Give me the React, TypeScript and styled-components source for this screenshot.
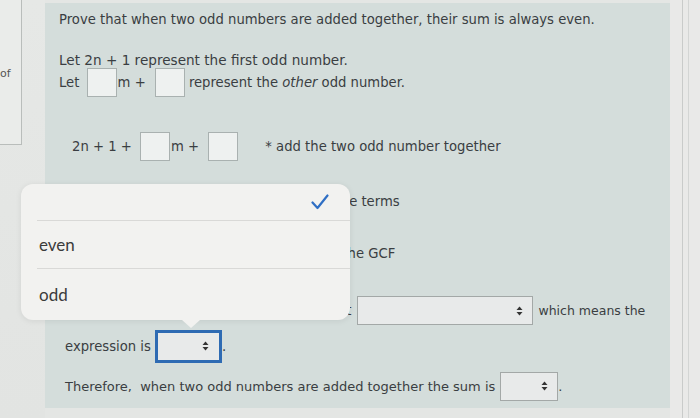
import React from "react";
import styled, { createGlobalStyle } from "styled-components";

const Global = createGlobalStyle`
  html, body { margin: 0; padding: 0; }
  body {
    width: 700px; height: 418px; overflow: hidden;
    background: #e4e6e4;
    font-family: "DejaVu Sans", Verdana, sans-serif;
    color: #3a3e42;
  }
`;

const Page = styled.div`
  position: relative;
  display: flex;
  width: 700px;
  height: 418px;
`;

const Gutter = styled.div`
  width: 45px;
  flex: none;
  background: linear-gradient(180deg, #e6e8e6 0%, #e2e4e2 100%);
`;

const SideBox = styled.div`
  width: 22px;
  height: 145px;
  border-right: 1px solid #b9bdbb;
  border-bottom: 1px solid #b9bdbb;
  background: #eaecea;
  display: flex;
  align-items: center;
  font-size: 11px;
  color: #555;
  box-sizing: border-box;
  & > span { margin-left: 0px; margin-top: 2px; }
`;

const Panel = styled.div`
  flex: none;
  width: 625px;
  margin: 3px 0 10px 0;
  background: #d4dddb;
  padding: 6px 0 0 14px;
  box-sizing: border-box;
  font-size: 13.2px;
`;

const Rail = styled.div`
  flex: 1;
  background: #e9e9e8;
  display: flex;
  & > div:nth-child(1) { width: 12px; border-right: 1px solid #c9cbca; }
  & > div:nth-child(2) { width: 5px; border-right: 1px solid #d3d5d4; }
`;

const Row = styled.div<{ $top: number; $h: number; $indent?: number; $size?: number }>`
  display: flex;
  align-items: center;
  white-space: pre;
  margin-top: ${(p) => p.$top}px;
  height: ${(p) => p.$h}px;
  padding-left: ${(p) => p.$indent ?? 0}px;
  ${(p) => (p.$size ? `font-size: ${p.$size}px;` : "")}
`;

const Box = styled.span<{ $ml?: number; $mr?: number }>`
  display: inline-block;
  width: 28px;
  height: 27px;
  border: 1px solid #a9b1b0;
  background: #eef1f0;
  margin-left: ${(p) => p.$ml ?? 0}px;
  margin-right: ${(p) => p.$mr ?? 0}px;
`;

const Hint = styled.span<{ $ml: number }>`
  margin-left: ${(p) => p.$ml}px;
`;

const Tail = styled.span`
  font-size: 12.5px;
  margin-left: 5px;
`;

const Select = styled.span<{ $w: number; $h: number; $active?: boolean; $ml?: number }>`
  display: inline-flex;
  align-items: center;
  justify-content: flex-end;
  box-sizing: border-box;
  width: ${(p) => p.$w}px;
  height: ${(p) => p.$h}px;
  margin-left: ${(p) => p.$ml ?? 0}px;
  background: #e8eaea;
  border: ${(p) => (p.$active ? "3px solid #2e6bb3" : "1px solid #a3a8a7")};
  padding-right: ${(p) => (p.$active ? 10 : 9)}px;
`;

const Arrows = () => (
  <svg width="7" height="10" viewBox="0 0 7 10">
    <path d="M3.5 0.5 L6.5 4 L0.5 4 Z" fill="#333" />
    <path d="M3.5 9.5 L6.5 6 L0.5 6 Z" fill="#333" />
  </svg>
);

const Popup = styled.div`
  position: absolute;
  left: 21px;
  top: 184px;
  width: 329px;
  height: 136px;
  background: #f2f2f0;
  border-radius: 12px;
  box-shadow: 0 1px 6px rgba(0, 0, 0, 0.08);
  font-family: Lato, "Noto Sans", sans-serif;
  font-size: 17px;
  color: #3b3b3b;
  display: flex;
  flex-direction: column;
  &::after {
    content: "";
    position: absolute;
    left: 161px;
    bottom: -8px;
    border-left: 9px solid transparent;
    border-right: 9px solid transparent;
    border-top: 8px solid #f2f2f0;
  }
`;

const Option = styled.div<{ $h: number; $line?: boolean }>`
  height: ${(p) => p.$h}px;
  margin-left: 16px;
  padding-left: 2px;
  display: flex;
  align-items: center;
  justify-content: ${(p) => (p.$line ? "flex-start" : "flex-end")};
  border-top: ${(p) => (p.$line ? "1px solid #d9d9d7" : "none")};
  box-sizing: border-box;
  padding-right: ${(p) => (p.$line ? 0 : 21)}px;
`;

const Check = () => (
  <svg width="18" height="16" viewBox="0 0 18 16">
    <path d="M1.5 8.5 L6.5 14 L16.5 1.5" fill="none" stroke="#2f6fc4" strokeWidth="2.2" strokeLinecap="round" strokeLinejoin="round" />
  </svg>
);

export default function App() {
  return (
    <>
      <Global />
      <Page>
        <Gutter>
          <SideBox>
            <span>of</span>
          </SideBox>
        </Gutter>
        <Panel>
          <Row $top={0} $h={20}>
            Prove that when two odd numbers are added together, their sum is always even.
          </Row>
          <Row $top={23} $h={16} $size={13.6}>
            Let 2n + 1 represent the first odd number.
          </Row>
          <Row $top={0} $h={29}>
            Let <Box $ml={3} $mr={1} />m + <Box $ml={5} $mr={4} />represent the <i>other</i> odd number.
          </Row>
          <Row $top={35} $h={29} $indent={13}>
            2n + 1 + <Box $ml={4} $mr={1} />m + <Box $ml={5} />
            <Hint $ml={27}>* add the two odd number together</Hint>
          </Row>
          <Row $top={30} $h={20} $indent={204}>
            * combine like terms
          </Row>
          <Row $top={32} $h={20} $indent={204}>
            * factor out the GCF
          </Row>
          <Row $top={33} $h={29} $indent={6}>
            Notice that the expression above represent
            <Select $w={176} $h={29} $ml={6}>
              <Arrows />
            </Select>
            <Tail>which means the</Tail>
          </Row>
          <Row $top={5} $h={32} $indent={6}>
            expression is
            <Select $w={67} $h={33} $active $ml={4}>
              <Arrows />
            </Select>
            .
          </Row>
          <Row $top={10} $h={28} $indent={6} $size={13}>
            Therefore,  when two odd numbers are added together the sum is
            <Select $w={58} $h={29} $ml={5}>
              <Arrows />
            </Select>
            .
          </Row>
        </Panel>
        <Rail>
          <div />
          <div />
        </Rail>
        <Popup>
          <Option $h={36}>
            <Check />
          </Option>
          <Option $h={48} $line>
            even
          </Option>
          <Option $h={52} $line>
            odd
          </Option>
        </Popup>
      </Page>
    </>
  );
}
